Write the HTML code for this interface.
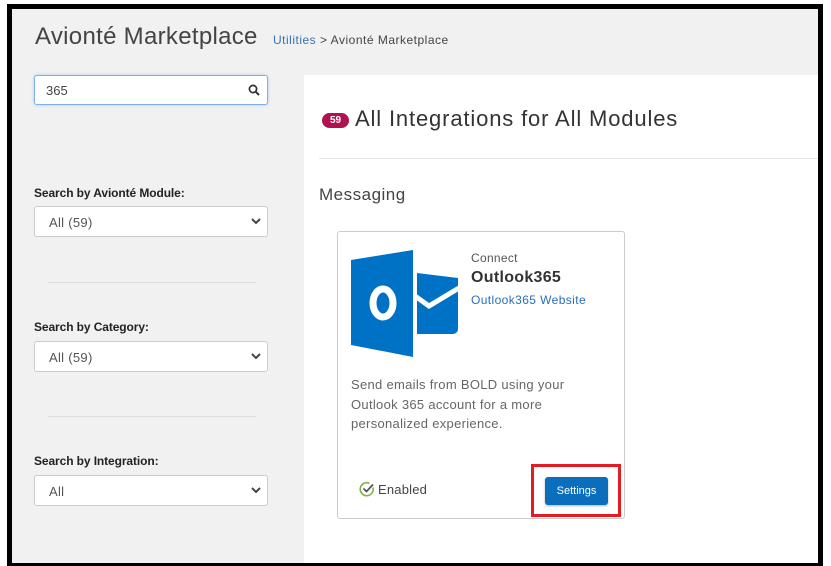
<!DOCTYPE html>
<html><head><meta charset="utf-8"><style>
*{box-sizing:border-box;margin:0;padding:0}
body{width:831px;height:566px;background:#fff;position:relative;overflow:hidden;font-family:"Liberation Sans",sans-serif;color:#444}
.frame{position:absolute;left:7px;top:4px;width:816px;height:562px;border:5px solid #000;border-bottom:3px solid #000;background:#f1f1f1;overflow:hidden}
.a{position:absolute;white-space:nowrap}
.sel{position:absolute;left:34px;width:234px;height:31px;background:#fff;border:1px solid #ccc;border-radius:3px;font-size:13px;color:#555;padding:8px 0 0 14px;letter-spacing:0.3px}
.sel svg{position:absolute;right:6px;top:11px}
.lbl{position:absolute;left:34px;font-size:12px;color:#222;font-weight:bold;letter-spacing:-0.1px}
.div{position:absolute;left:48px;width:208px;height:1px;background:#ddd}
</style></head><body>
<div class="frame"></div>
<div class="a" style="left:35px;top:23px;font-size:24px;color:#444;letter-spacing:0.3px">Avionté Marketplace</div>
<div class="a" style="left:273px;top:33px;font-size:12px;color:#444;letter-spacing:0.5px"><span style="color:#3a6fb5">Utilities</span> &gt; Avionté Marketplace</div>
<div class="a" style="left:34px;top:75px;width:234px;height:30px;background:#fff;border:1px solid #7fb1e6;border-radius:3px;box-shadow:0 0 3px #a8cdf0;font-size:13px;padding:7px 0 0 11px;color:#444">365
<svg style="position:absolute;right:7px;top:8px" width="12" height="12" viewBox="0 0 12 12"><circle cx="5" cy="5" r="3.6" fill="none" stroke="#333" stroke-width="1.7"/><path d="M7.6 7.6L11 11" stroke="#333" stroke-width="2"/></svg></div>
<div class="lbl" style="top:186px">Search by Avionté Module:</div>
<div class="sel" style="top:206px">All (59)<svg width="10" height="7" viewBox="0 0 10 7"><path d="M1 1l4 4 4-4" fill="none" stroke="#444" stroke-width="2"/></svg></div>
<div class="div" style="top:282px"></div>
<div class="lbl" style="top:320px">Search by Category:</div>
<div class="sel" style="top:341px">All (59)<svg width="10" height="7" viewBox="0 0 10 7"><path d="M1 1l4 4 4-4" fill="none" stroke="#444" stroke-width="2"/></svg></div>
<div class="div" style="top:416px"></div>
<div class="lbl" style="top:454px">Search by Integration:</div>
<div class="sel" style="top:475px">All<svg width="10" height="7" viewBox="0 0 10 7"><path d="M1 1l4 4 4-4" fill="none" stroke="#444" stroke-width="2"/></svg></div>
<div class="a" style="left:304px;top:75px;width:514px;height:488px;background:#fff"></div>
<div class="a" style="left:322px;top:113px;width:27px;height:15px;border-radius:8px;background:#b0124f;color:#fff;font-size:10px;font-weight:bold;text-align:center;line-height:15px">59</div>
<div class="a" style="left:355px;top:106px;font-size:22px;color:#333;letter-spacing:0.85px">All Integrations for All Modules</div>
<div class="a" style="left:319px;top:158px;width:499px;height:1px;background:#e4e4e4"></div>
<div class="a" style="left:319px;top:185px;font-size:17px;color:#444;letter-spacing:0.5px">Messaging</div>
<div class="a" style="left:337px;top:231px;width:288px;height:288px;border:1px solid #ccc;border-radius:3px;background:#fff"></div>
<svg class="a" style="left:351px;top:250px" width="108" height="107" viewBox="0 0 108 107">
<path d="M0 10L62 0V107L0 95Z" fill="#0072c6"/>
<path d="M66 23L107 28V79A5 5 0 0 1 102 84H66Z" fill="#0072c6"/>
<path d="M64 46L78 56L108 38" fill="none" stroke="#fff" stroke-width="5"/>
<ellipse cx="32" cy="53" rx="10" ry="14" fill="none" stroke="#fff" stroke-width="7"/>
</svg>
<div class="a" style="left:471px;top:251px;font-size:12px;color:#555;letter-spacing:0.3px">Connect</div>
<div class="a" style="left:471px;top:269px;font-size:16px;font-weight:bold;color:#333;letter-spacing:0.3px">Outlook365</div>
<div class="a" style="left:471px;top:293px;font-size:12px;color:#2a6ebb;letter-spacing:0.4px">Outlook365 Website</div>
<div class="a" style="left:351px;top:375px;font-size:13px;color:#666;line-height:19.5px;letter-spacing:0.3px">Send emails from BOLD using your<br>Outlook 365 account for a more<br>personalized experience.</div>
<svg class="a" style="left:359px;top:481px" width="16" height="16" viewBox="0 0 16 16"><path d="M14 6.5A6.5 6.5 0 1 1 10.5 2.3" fill="none" stroke="#7cb342" stroke-width="1.6"/><path d="M4.5 7.5L7.5 10.5L14 3.5" fill="none" stroke="#555" stroke-width="1.8"/></svg>
<div class="a" style="left:378px;top:482px;font-size:13px;color:#444;letter-spacing:0.2px">Enabled</div>
<div class="a" style="left:531px;top:464px;width:90px;height:53px;border:3px solid #e31b23"></div>
<div class="a" style="left:545px;top:477px;width:63px;height:28px;background:#0a6ebd;border-radius:3px;color:#fff;font-size:11px;text-align:center;line-height:28px;box-shadow:0 1px 2px rgba(0,0,0,.3)">Settings</div>
</body></html>
